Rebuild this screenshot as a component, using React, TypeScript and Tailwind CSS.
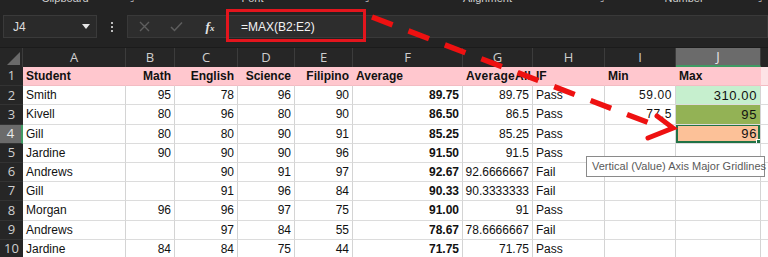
import React from 'react'

type Cell = {
  t?: string
  align?: 'l' | 'r'
  bold?: boolean
  bg?: string
  cls?: string
}

const cols = [
  { key: 'A', w: 'w-[103px]' },
  { key: 'B', w: 'w-[49px]' },
  { key: 'C', w: 'w-[63px]' },
  { key: 'D', w: 'w-[57px]' },
  { key: 'E', w: 'w-[58px]' },
  { key: 'F', w: 'w-[110px]' },
  { key: 'G', w: 'w-[70px]' },
  { key: 'H', w: 'w-[72px]' },
  { key: 'I', w: 'w-[71px]' },
  { key: 'J', w: 'w-[85px]' },
]

const students: [string, string, string, string, string, string, string, string][] = [
  ['Smith', '95', '78', '96', '90', '89.75', '89.75', 'Pass'],
  ['Kivell', '80', '96', '80', '90', '86.50', '86.5', 'Pass'],
  ['Gill', '80', '80', '90', '91', '85.25', '85.25', 'Pass'],
  ['Jardine', '90', '90', '90', '96', '91.50', '91.5', 'Pass'],
  ['Andrews', '', '90', '91', '97', '92.67', '92.6666667', 'Fail'],
  ['Gill', '', '91', '96', '84', '90.33', '90.3333333', 'Fail'],
  ['Morgan', '96', '96', '97', '75', '91.00', '91', 'Pass'],
  ['Andrews', '', '97', '84', '55', '78.67', '78.6666667', 'Fail'],
  ['Jardine', '84', '84', '75', '44', '71.75', '71.75', 'Pass'],
]

const minCol = ['59.00', '77.5', '', '', '', '', '', '', '']
const maxCol: Cell[] = [
  { t: '310.00', align: 'r', bg: 'bg-[#c6efce]', cls: 'text-[#2e7d32] font-["Lato",sans-serif] text-[13px] tracking-[0.6px]' },
  { t: '95', align: 'r', bg: 'bg-[#93b255]', cls: 'text-[#1d2a10] font-["Lato",sans-serif] text-[13px] tracking-[0.6px]' },
  { t: '96', align: 'r', bg: 'bg-[#fcc198]', cls: 'text-[#6e5877] font-["Lato",sans-serif] text-[13px] tracking-[0.6px]' },
]

const header: Cell[] = [
  { t: 'Student', align: 'l', bold: true },
  { t: 'Math', align: 'r', bold: true },
  { t: 'English', align: 'r', bold: true },
  { t: 'Science', align: 'r', bold: true },
  { t: 'Filipino', align: 'r', bold: true },
  { t: 'Average', align: 'l', bold: true },
  { t: 'AverageAll', align: 'l', bold: true, cls: 'tracking-[0.3px]' },
  { t: 'IF', align: 'l', bold: true },
  { t: 'Min', align: 'l', bold: true },
  { t: 'Max', align: 'l', bold: true },
]

function buildRows(): Cell[][] {
  return students.map((s, i) => [
    { t: s[0], align: 'l' },
    { t: s[1], align: 'r' },
    { t: s[2], align: 'r' },
    { t: s[3], align: 'r' },
    { t: s[4], align: 'r' },
    { t: s[5], align: 'r', bold: true },
    { t: s[6], align: 'r' },
    { t: s[7], align: 'l' },
    { t: minCol[i], align: 'r', cls: 'tracking-[0.6px]' },
    maxCol[i] || { t: '' },
  ])
}

function Ribbon() {
  const labels = [
    { t: 'Clipboard', x: 'w-[140px]' },
    { t: 'Font', x: 'w-[235px]' },
    { t: 'Alignment', x: 'w-[235px]' },
    { t: 'Number', x: 'w-[158px]' },
  ]
  return (
    <div className="h-[14px] bg-[#232323] overflow-hidden flex">
      {labels.map(l => (
        <div key={l.t} className={`${l.x} shrink-0 flex items-start justify-between pr-[6px]`}>
          <span className="flex-1 text-center text-[11px] leading-[12px] -mt-[8px] text-[#cfcfcf]">{l.t}</span>
          <span className="-mt-[8px] text-[9px] leading-[12px] text-[#bdbdbd]">⌟</span>
        </div>
      ))}
    </div>
  )
}

function FormulaBar() {
  return (
    <div className="h-[33px] bg-[#232323] flex items-start pt-[1px] pl-[3px]">
      <div className="w-[94px] h-[23px] bg-[#2a2a2a] border border-[#3a3a3a] flex items-center justify-between pl-[9px] pr-[6px]">
        <span className="text-[12px] text-[#dcdcdc]">J4</span>
        <svg width="8" height="5" viewBox="0 0 8 5"><path d="M0 0 L8 0 L4 5 Z" fill="#e6e6e6" /></svg>
      </div>
      <div className="w-[30px] h-[23px] flex flex-col items-center justify-center gap-[2px]">
        <span className="w-[2px] h-[2px] bg-[#bdbdbd]" />
        <span className="w-[2px] h-[2px] bg-[#bdbdbd]" />
        <span className="w-[2px] h-[2px] bg-[#bdbdbd]" />
      </div>
      <div className="flex-1 h-[23px] bg-[#2d2d2d] border border-[#393939] flex items-center">
        <div className="w-[32px] flex justify-center">
          <svg width="11" height="11" viewBox="0 0 11 11"><path d="M1 1 L10 10 M10 1 L1 10" stroke="#5e5e5e" strokeWidth="1.4" /></svg>
        </div>
        <div className="w-[32px] flex justify-center">
          <svg width="13" height="11" viewBox="0 0 13 11"><path d="M1 6 L4.5 9.5 L12 1.5" stroke="#5e5e5e" strokeWidth="1.5" fill="none" /></svg>
        </div>
        <div className="w-[36px] flex justify-center">
          <span className="text-[13px] italic text-[#e5e5e5] font-['Liberation_Serif',serif] font-bold leading-none">f<span className="text-[9px]">x</span></span>
        </div>
        <span className="pl-[13px] text-[12px] text-[#f2f2f2] font-['Liberation_Sans',sans-serif]">=MAX(B2:E2)</span>
      </div>
    </div>
  )
}

function ColumnHeaders() {
  return (
    <div className="flex h-[20px] bg-[#262626] border-t border-[#1b1b1b]">
      <div className="w-[23px] shrink-0 relative border-r border-[#3c3c3c]">
        <svg className="absolute right-[2px] bottom-[2px]" width="13" height="13" viewBox="0 0 13 13"><path d="M13 0 L13 13 L0 13 Z" fill="#6a6a6a" /></svg>
      </div>
      {cols.map(c => (
        <div
          key={c.key}
          className={`${c.w} shrink-0 flex items-center justify-center text-[13px] font-['Open_Sans',sans-serif] border-r border-[#3c3c3c] ${
            c.key === 'J' ? 'bg-[#6b6b6b] text-[#e9e9e9] border-b-2 border-b-[#3f9a63]' : 'text-[#cfcfcf]'
          }`}
        >
          {c.key}
        </div>
      ))}
      <div className="flex-1" />
    </div>
  )
}

function GridRow({ n, cells, head }: { n: number; cells: Cell[]; head?: boolean }) {
  const sel = n === 4
  return (
    <div className="flex h-[19.2px]">
      <div
        className={`w-[23px] shrink-0 flex items-center justify-center text-[13px] font-['Open_Sans',sans-serif] border-b border-[#333] ${
          sel ? 'bg-[#6b6b6b] text-[#ececec] border-r-2 border-r-[#3f9a63]' : 'bg-[#262626] text-[#cfcfcf]'
        }`}
      >
        {n}
      </div>
      {cells.map((c, i) => {
        const bg = c.bg || (head ? 'bg-[#ffc7ce]' : 'bg-white')
        const lines = head ? 'border-b-[#f3bcc3] border-r-[#ffc7ce]' : 'border-b-[#dcdcdc] border-r-[#d4d4d4]'
        return (
          <div
            key={i}
            className={`${cols[i].w} ${bg} ${lines} shrink-0 relative flex items-center overflow-hidden whitespace-nowrap px-[3px] text-[12px] text-[#111] border-b border-r ${
              c.align === 'r' ? 'justify-end' : 'justify-start'
            } ${c.bold ? 'font-bold' : ''} font-['Liberation_Sans',sans-serif] ${c.cls || ''}`}
          >
            {c.t}
            {sel && i === 9 && (
              <>
                <div className="absolute inset-0 -top-[1px] border-2 border-[#217346] pointer-events-none" />
                <div className="absolute -right-[1px] -bottom-[1px] w-[5px] h-[5px] bg-[#217346] border border-white" />
              </>
            )}
          </div>
        )
      })}
      <div className={`flex-1 border-b ${head ? 'bg-[#fde3e6] border-b-[#f3bcc3]' : 'bg-white border-b-[#dcdcdc]'}`} />
    </div>
  )
}

export default function App() {
  const rows = buildRows()
  return (
    <div className="w-[768px] h-[257px] overflow-hidden relative bg-white font-['Liberation_Sans',sans-serif]">
      <Ribbon />
      <FormulaBar />
      <ColumnHeaders />
      <GridRow n={1} cells={header} head />
      {rows.map((r, i) => (
        <GridRow key={i} n={i + 2} cells={r} />
      ))}

      {/* red annotation box round the formula */}
      <div className="absolute left-[226px] top-[9px] w-[140px] h-[33px] border-[3px] border-[#e3151d] pointer-events-none" />

      {/* dashed arrow */}
      <svg className="absolute inset-0 pointer-events-none" width="768" height="257" viewBox="0 0 768 257">
        <line x1="372" y1="17" x2="652" y2="124" stroke="#ee1111" strokeWidth="5.5" strokeDasharray="22 17" />
        <path d="M657 116 L673 128 L648 138" fill="none" stroke="#ee1111" strokeWidth="5" strokeLinejoin="miter" strokeLinecap="round" />
      </svg>

      {/* tooltip */}
      <div className="absolute left-[586px] top-[156px] w-[179px] h-[21px] bg-white border border-[#8a8a8a] flex items-center px-[5px] text-[11px] text-[#5a5a5a] font-['Liberation_Sans',sans-serif] whitespace-nowrap">
        Vertical (Value) Axis Major Gridlines
      </div>
    </div>
  )
}
